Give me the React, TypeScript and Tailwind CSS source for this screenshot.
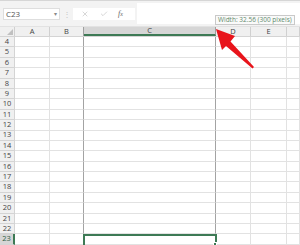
import { X, Check } from "lucide-react";

const cols = [
  { name: "A", w: "w-[35px]" },
  { name: "B", w: "w-[34px]" },
  { name: "C", w: "w-[132px]" },
  { name: "D", w: "w-[35px]" },
  { name: "E", w: "w-[36px]" },
  { name: "", w: "flex-1" },
];

const rows = Array.from({ length: 20 }, (_, i) => i + 4);

export default function App() {
  return (
    <div className="relative w-[300px] h-[245px] overflow-hidden bg-white font-['Open_Sans','Liberation_Sans',sans-serif] text-[#444]">
      {/* formula bar */}
      <div className="flex items-center h-[27px] bg-[#f3f3f3] border-t border-[#d6d6d6] border-b border-b-[#e2e2e2]">
        <div className="ml-[3px] w-[57px] h-[12px] bg-white border border-[#dedede] flex items-center justify-between px-[2px]">
          <span className="text-[8px] leading-none text-[#555]">C23</span>
          <span className="text-[6px] leading-none text-[#888]">▾</span>
        </div>
        <div className="w-[13px] flex justify-center text-[8px] text-[#c4c4c4] leading-none">⋮</div>
        <div className="w-[62px] h-[12px] bg-white flex items-center">
          <X className="ml-[8px] w-[8px] h-[8px] text-[#b3b3b3]" strokeWidth={1.6} />
          <Check className="ml-[11px] w-[8px] h-[8px] text-[#b3b3b3]" strokeWidth={1.6} />
          <span className="ml-[10px] text-[8px] italic font-['Liberation_Serif',serif] text-[#666] leading-none">
            f<span className="text-[6px]">x</span>
          </span>
        </div>
        <div className="ml-[2px] flex-1 self-stretch my-[2px] bg-white" />
      </div>

      {/* column headers */}
      <div className="flex h-[10px] bg-[#f0f0f0] border-b border-[#d4d4d4]">
        <div className="relative w-[15px] border-r border-[#d0d0d0]">
          <div className="absolute right-[1px] bottom-[1px] w-0 h-0 border-l-[6px] border-l-transparent border-b-[6px] border-b-[#c0c0c0]" />
        </div>
        {cols.map((c) => (
          <div
            key={c.name + "h"}
            className={`${c.w} flex items-center justify-center text-[7.5px] leading-none ${
              c.name === "C"
                ? "bg-[#d6d6d6] border-b-2 border-b-[#3d7a55] border-r border-r-[#9f9f9f]"
                : c.name === "B"
                ? "border-r border-[#9f9f9f]"
                : "border-r border-[#d0d0d0]"
            }`}
          >
            {c.name}
          </div>
        ))}
      </div>

      {/* rows */}
      {rows.map((r) => (
        <div key={r} className="flex h-[10.4px]">
          <div
            className={`w-[15px] flex items-center justify-center text-[7.5px] leading-none border-b ${
              r === 23
                ? "bg-[#d6d6d6] border-r-2 border-r-[#3d7a55] border-b-[#d4d4d4] text-[#2f5f42]"
                : "bg-[#f0f0f0] border-r border-[#d4d4d4]"
            }`}
          >
            {r}
          </div>
          {cols.map((c) => (
            <div
              key={c.name + r}
              className={`${c.w} border-b border-b-[#e2e2e2] ${
                c.name === "B" || c.name === "C" ? "border-r border-r-[#a3a3a3]" : "border-r border-r-[#e2e2e2]"
              }`}
            />
          ))}
        </div>
      ))}

      {/* active cell C23 */}
      <div className="absolute left-[83px] top-[234px] w-[134px] h-[14px] border-2 border-[#3d7a55]" />
      <div className="absolute left-[213px] top-[242px] w-[4px] h-[4px] bg-[#3d7a55] border border-white" />

      {/* width tooltip */}
      <div className="absolute left-[215px] top-[15px] h-[10px] px-[2px] flex items-center bg-[#fafafa] border border-[#c9c9c9] text-[6.5px] leading-none text-[#5f8a6c] whitespace-nowrap">
        Width: 32.56 (300 pixels)
      </div>

      {/* red arrow */}
      <svg className="absolute left-0 top-0" width="300" height="245" viewBox="0 0 300 245">
        <polygon
          points="216,29 235,36 230.5,41.5 254,67 252.5,68.5 226,46 222,50"
          fill="#e8141b"
        />
      </svg>
    </div>
  );
}
